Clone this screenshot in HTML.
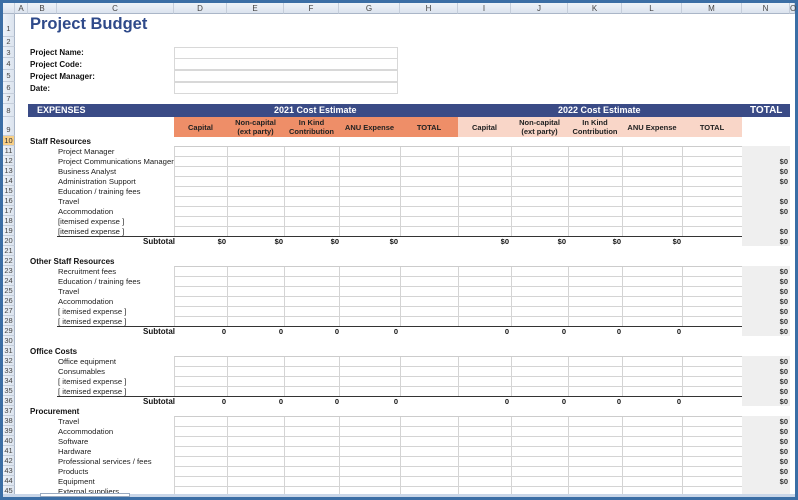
<!DOCTYPE html>
<html><head><meta charset="utf-8"><style>
*{margin:0;padding:0;box-sizing:border-box}
body{width:798px;height:500px;overflow:hidden;background:#fff;position:relative;font-family:"Liberation Sans",Arial,sans-serif;font-size:8px;color:#111}
div{position:absolute;white-space:nowrap}
.ch{top:3px;height:11px;background:linear-gradient(#eef3f9,#dbe3ee);border-right:1px solid #c5cedb;border-bottom:1px solid #aab6c8;color:#444;font-size:8px;text-align:center;line-height:11px}
.rn{left:3px;width:12px;background:linear-gradient(90deg,#eef3f9,#dbe3ee);border-bottom:1px solid #c5cedb;border-right:1px solid #aab6c8;color:#444;font-size:7.5px;text-align:center}
.lb{left:30px;font-weight:bold;font-size:8px}
.it{left:58px;font-size:7.7px;color:#222}
.inp{left:174px;width:224px;border:1px solid #d8d8d8}
.box{left:174px;width:568px;border-top:1px solid #ccc;
background-image:
linear-gradient(90deg,transparent 52px,#d4d4d4 52px,#d4d4d4 53px,transparent 53px),
linear-gradient(90deg,transparent 109px,#d4d4d4 109px,#d4d4d4 110px,transparent 110px),
linear-gradient(90deg,transparent 164px,#d4d4d4 164px,#d4d4d4 165px,transparent 165px),
linear-gradient(90deg,transparent 225px,#d4d4d4 225px,#d4d4d4 226px,transparent 226px),
linear-gradient(90deg,transparent 283px,#d4d4d4 283px,#d4d4d4 284px,transparent 284px),
linear-gradient(90deg,transparent 336px,#d4d4d4 336px,#d4d4d4 337px,transparent 337px),
linear-gradient(90deg,transparent 393px,#d4d4d4 393px,#d4d4d4 394px,transparent 394px),
linear-gradient(90deg,transparent 447px,#d4d4d4 447px,#d4d4d4 448px,transparent 448px),
linear-gradient(90deg,transparent 507px,#d4d4d4 507px,#d4d4d4 508px,transparent 508px),
linear-gradient(90deg,transparent 567px,#d4d4d4 567px),
repeating-linear-gradient(180deg,transparent 0,transparent 9px,#d4d4d4 9px,#d4d4d4 10px);
border-left:1px solid #d4d4d4}
.ng{left:742px;width:48px;background:#efefef}
.nv{left:742px;width:46px;text-align:right;font-weight:bold;font-size:7.5px;color:#333}
.st{left:57px;width:685px;border-top:1px solid #333;height:10px}
.sv{font-weight:bold;font-size:7.5px;text-align:right;width:40px}
.hd{top:117px;height:20px;font-weight:bold;font-size:7.5px;text-align:center;line-height:9px;display:flex;align-items:center;justify-content:center;color:#222}
</style></head><body>
<div style="left:0;top:0;width:798px;height:3px;background:#3b6ea5"></div>
<div style="left:0;top:0;width:3px;height:500px;background:#3b6ea5"></div>
<div style="left:795px;top:0;width:3px;height:500px;background:#3b6ea5"></div>
<div class="ch" style="left:3px;width:12px"></div>
<div class="ch" style="left:15px;width:13px">A</div>
<div class="ch" style="left:28px;width:29px">B</div>
<div class="ch" style="left:57px;width:117px">C</div>
<div class="ch" style="left:174px;width:53px">D</div>
<div class="ch" style="left:227px;width:57px">E</div>
<div class="ch" style="left:284px;width:55px">F</div>
<div class="ch" style="left:339px;width:61px">G</div>
<div class="ch" style="left:400px;width:58px">H</div>
<div class="ch" style="left:458px;width:53px">I</div>
<div class="ch" style="left:511px;width:57px">J</div>
<div class="ch" style="left:568px;width:54px">K</div>
<div class="ch" style="left:622px;width:60px">L</div>
<div class="ch" style="left:682px;width:60px">M</div>
<div class="ch" style="left:742px;width:48px">N</div>
<div class="ch" style="left:790px;width:5px">O</div>
<div class="rn" style="top:14px;height:23px;line-height:30px">1</div>
<div class="rn" style="top:37px;height:10px;line-height:10px">2</div>
<div class="rn" style="top:47px;height:11px;line-height:11px">3</div>
<div class="rn" style="top:58px;height:12px;line-height:12px">4</div>
<div class="rn" style="top:70px;height:12px;line-height:12px">5</div>
<div class="rn" style="top:82px;height:12px;line-height:12px">6</div>
<div class="rn" style="top:94px;height:10px;line-height:10px">7</div>
<div class="rn" style="top:104px;height:13px;line-height:13px">8</div>
<div class="rn" style="top:117px;height:19px;line-height:26px">9</div>
<div class="rn" style="top:136px;height:10px;line-height:10px;background:#f8cf85;color:#333">10</div>
<div class="rn" style="top:146px;height:10px;line-height:10px">11</div>
<div class="rn" style="top:156px;height:10px;line-height:10px">12</div>
<div class="rn" style="top:166px;height:10px;line-height:10px">13</div>
<div class="rn" style="top:176px;height:10px;line-height:10px">14</div>
<div class="rn" style="top:186px;height:10px;line-height:10px">15</div>
<div class="rn" style="top:196px;height:10px;line-height:10px">16</div>
<div class="rn" style="top:206px;height:10px;line-height:10px">17</div>
<div class="rn" style="top:216px;height:10px;line-height:10px">18</div>
<div class="rn" style="top:226px;height:10px;line-height:10px">19</div>
<div class="rn" style="top:236px;height:10px;line-height:10px">20</div>
<div class="rn" style="top:246px;height:10px;line-height:10px">21</div>
<div class="rn" style="top:256px;height:10px;line-height:10px">22</div>
<div class="rn" style="top:266px;height:10px;line-height:10px">23</div>
<div class="rn" style="top:276px;height:10px;line-height:10px">24</div>
<div class="rn" style="top:286px;height:10px;line-height:10px">25</div>
<div class="rn" style="top:296px;height:10px;line-height:10px">26</div>
<div class="rn" style="top:306px;height:10px;line-height:10px">27</div>
<div class="rn" style="top:316px;height:10px;line-height:10px">28</div>
<div class="rn" style="top:326px;height:10px;line-height:10px">29</div>
<div class="rn" style="top:336px;height:10px;line-height:10px">30</div>
<div class="rn" style="top:346px;height:10px;line-height:10px">31</div>
<div class="rn" style="top:356px;height:10px;line-height:10px">32</div>
<div class="rn" style="top:366px;height:10px;line-height:10px">33</div>
<div class="rn" style="top:376px;height:10px;line-height:10px">34</div>
<div class="rn" style="top:386px;height:10px;line-height:10px">35</div>
<div class="rn" style="top:396px;height:10px;line-height:10px">36</div>
<div class="rn" style="top:406px;height:10px;line-height:10px">37</div>
<div class="rn" style="top:416px;height:10px;line-height:10px">38</div>
<div class="rn" style="top:426px;height:10px;line-height:10px">39</div>
<div class="rn" style="top:436px;height:10px;line-height:10px">40</div>
<div class="rn" style="top:446px;height:10px;line-height:10px">41</div>
<div class="rn" style="top:456px;height:10px;line-height:10px">42</div>
<div class="rn" style="top:466px;height:10px;line-height:10px">43</div>
<div class="rn" style="top:476px;height:10px;line-height:10px">44</div>
<div class="rn" style="top:486px;height:10px;line-height:10px">45</div>

<div style="left:30px;top:15px;font-size:16.5px;font-weight:bold;color:#2f4a8a">Project Budget</div>
<div class="lb" style="top:48px">Project Name:</div>
<div class="lb" style="top:60px">Project Code:</div>
<div class="lb" style="top:72px">Project Manager:</div>
<div class="lb" style="top:84px">Date:</div>
<div class="inp" style="top:47px;height:12px"></div>
<div class="inp" style="top:58px;height:12px"></div>
<div class="inp" style="top:70px;height:12px"></div>
<div class="inp" style="top:82px;height:12px"></div>

<div style="left:28px;top:104px;width:762px;height:13px;background:#3a4b86;color:#fff;font-weight:bold;font-size:9px;line-height:13px">
<span style="position:absolute;left:9px">EXPENSES</span>
<span style="position:absolute;left:246px">2021 Cost Estimate</span>
<span style="position:absolute;left:530px">2022 Cost Estimate</span>
<span style="position:absolute;left:722px;font-size:10px">TOTAL</span></div>
<div class="hd" style="left:174px;width:53px;background:#ee8e68">Capital</div>
<div class="hd" style="left:227px;width:57px;background:#ee8e68">Non-capital<br>(ext party)</div>
<div class="hd" style="left:284px;width:55px;background:#ee8e68">In Kind<br>Contribution</div>
<div class="hd" style="left:339px;width:61px;background:#ee8e68">ANU Expense</div>
<div class="hd" style="left:400px;width:58px;background:#ee8e68">TOTAL</div>
<div class="hd" style="left:458px;width:53px;background:#f9d6c8">Capital</div>
<div class="hd" style="left:511px;width:57px;background:#f9d6c8">Non-capital<br>(ext party)</div>
<div class="hd" style="left:568px;width:54px;background:#f9d6c8">In Kind<br>Contribution</div>
<div class="hd" style="left:622px;width:60px;background:#f9d6c8">ANU Expense</div>
<div class="hd" style="left:682px;width:60px;background:#f9d6c8">TOTAL</div>

<div class="lb" style="top:137px">Staff Resources</div>
<div class="it" style="top:147px">Project Manager</div>
<div class="it" style="top:157px">Project Communications Manager</div>
<div class="it" style="top:167px">Business Analyst</div>
<div class="it" style="top:177px">Administration Support</div>
<div class="it" style="top:187px">Education / training fees</div>
<div class="it" style="top:197px">Travel</div>
<div class="it" style="top:207px">Accommodation</div>
<div class="it" style="top:217px">[itemised expense ]</div>
<div class="it" style="top:227px">[itemised expense ]</div>
<div class="box" style="top:146px;height:90px"></div>
<div class="ng" style="top:146px;height:100px"></div>
<div class="st" style="top:236px"></div>
<div class="lb" style="top:237px;left:143px">Subtotal</div>
<div class="nv" style="top:157px">$0</div><div class="nv" style="top:167px">$0</div><div class="nv" style="top:177px">$0</div>
<div class="nv" style="top:197px">$0</div><div class="nv" style="top:207px">$0</div>
<div class="nv" style="top:227px">$0</div><div class="nv" style="top:237px">$0</div>
<div class="sv" style="top:237px;left:186px">$0</div>
<div class="sv" style="top:237px;left:243px">$0</div>
<div class="sv" style="top:237px;left:299px">$0</div>
<div class="sv" style="top:237px;left:358px">$0</div>
<div class="sv" style="top:237px;left:469px">$0</div>
<div class="sv" style="top:237px;left:526px">$0</div>
<div class="sv" style="top:237px;left:581px">$0</div>
<div class="sv" style="top:237px;left:641px">$0</div>

<div class="lb" style="top:257px">Other Staff Resources</div>
<div class="it" style="top:267px">Recruitment fees</div>
<div class="it" style="top:277px">Education / training fees</div>
<div class="it" style="top:287px">Travel</div>
<div class="it" style="top:297px">Accommodation</div>
<div class="it" style="top:307px">[ itemised expense ]</div>
<div class="it" style="top:317px">[ itemised expense ]</div>
<div class="box" style="top:266px;height:60px"></div>
<div class="ng" style="top:266px;height:70px"></div>
<div class="st" style="top:326px"></div>
<div class="lb" style="top:327px;left:143px">Subtotal</div>
<div class="nv" style="top:267px">$0</div><div class="nv" style="top:277px">$0</div><div class="nv" style="top:287px">$0</div>
<div class="nv" style="top:297px">$0</div><div class="nv" style="top:307px">$0</div><div class="nv" style="top:317px">$0</div><div class="nv" style="top:327px">$0</div>
<div class="sv" style="top:327px;left:186px">0</div>
<div class="sv" style="top:327px;left:243px">0</div>
<div class="sv" style="top:327px;left:299px">0</div>
<div class="sv" style="top:327px;left:358px">0</div>
<div class="sv" style="top:327px;left:469px">0</div>
<div class="sv" style="top:327px;left:526px">0</div>
<div class="sv" style="top:327px;left:581px">0</div>
<div class="sv" style="top:327px;left:641px">0</div>

<div class="lb" style="top:347px">Office Costs</div>
<div class="it" style="top:357px">Office equipment</div>
<div class="it" style="top:367px">Consumables</div>
<div class="it" style="top:377px">[ itemised expense ]</div>
<div class="it" style="top:387px">[ itemised expense ]</div>
<div class="box" style="top:356px;height:40px"></div>
<div class="ng" style="top:356px;height:50px"></div>
<div class="st" style="top:396px"></div>
<div class="lb" style="top:397px;left:143px">Subtotal</div>
<div class="nv" style="top:357px">$0</div><div class="nv" style="top:367px">$0</div><div class="nv" style="top:377px">$0</div>
<div class="nv" style="top:387px">$0</div><div class="nv" style="top:397px">$0</div>
<div class="sv" style="top:397px;left:186px">0</div>
<div class="sv" style="top:397px;left:243px">0</div>
<div class="sv" style="top:397px;left:299px">0</div>
<div class="sv" style="top:397px;left:358px">0</div>
<div class="sv" style="top:397px;left:469px">0</div>
<div class="sv" style="top:397px;left:526px">0</div>
<div class="sv" style="top:397px;left:581px">0</div>
<div class="sv" style="top:397px;left:641px">0</div>

<div class="lb" style="top:407px">Procurement</div>
<div class="it" style="top:417px">Travel</div>
<div class="it" style="top:427px">Accommodation</div>
<div class="it" style="top:437px">Software</div>
<div class="it" style="top:447px">Hardware</div>
<div class="it" style="top:457px">Professional services / fees</div>
<div class="it" style="top:467px">Products</div>
<div class="it" style="top:477px">Equipment</div>
<div class="it" style="top:487px">External suppliers</div>
<div class="box" style="top:416px;height:80px"></div>
<div class="ng" style="top:416px;height:80px"></div>
<div class="nv" style="top:417px">$0</div><div class="nv" style="top:427px">$0</div><div class="nv" style="top:437px">$0</div>
<div class="nv" style="top:447px">$0</div><div class="nv" style="top:457px">$0</div><div class="nv" style="top:467px">$0</div><div class="nv" style="top:477px">$0</div>

<div style="left:3px;top:494px;width:792px;height:3px;background:#c9d6e8"></div>
<div style="left:40px;top:493px;width:90px;height:4px;background:#fff;border:1px solid #9aaac0"></div>
<div style="left:0;top:497px;width:798px;height:3px;background:#3b6ea5"></div>
</body></html>
